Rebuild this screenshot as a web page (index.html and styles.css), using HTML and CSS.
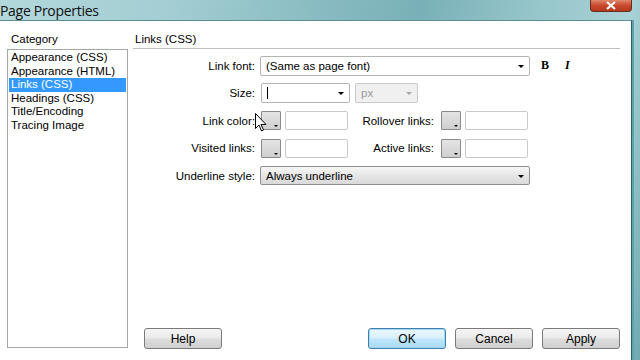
FILE: index.html
```html
<!DOCTYPE html>
<html>
<head>
<meta charset="utf-8">
<link rel="stylesheet" href="styles.css">
</head>
<body>
<div class="window">
  <div class="titlebar">
    <span class="title">Page Properties</span>
    <span class="close"><svg width="12" height="9" viewBox="0 0 12 9"><path d="M2 1 L10 8 M10 1 L2 8" stroke="#fff" stroke-width="2.2"/></svg></span>
  </div>
  <div class="client">
    <div class="catcol">
      <div class="caption">Category</div>
      <ul class="list">
        <li>Appearance (CSS)</li>
        <li>Appearance (HTML)</li>
        <li class="sel">Links (CSS)</li>
        <li>Headings (CSS)</li>
        <li>Title/Encoding</li>
        <li>Tracing Image</li>
      </ul>
    </div>
    <div class="panel">
      <div class="heading">Links (CSS)</div>
      <div class="form">
        <div class="row r1">
          <label class="lbl">Link font:</label>
          <div class="select wide"><span>(Same as page font)</span><i class="arrow"></i></div>
          <span class="bi b">B</span>
          <span class="bi it">I</span>
        </div>
        <div class="row r2">
          <label class="lbl">Size:</label>
          <div class="select size"><span class="caret"></span><i class="arrow"></i></div>
          <div class="select px dis"><span>px</span><i class="arrow"></i></div>
        </div>
        <div class="row r3">
          <label class="lbl">Link color:</label>
          <span class="swatch"><i></i></span>
          <span class="field"></span>
          <label class="lbl2">Rollover links:</label>
          <span class="swatch"><i></i></span>
          <span class="field"></span>
        </div>
        <div class="row r4">
          <label class="lbl">Visited links:</label>
          <span class="swatch"><i></i></span>
          <span class="field"></span>
          <label class="lbl2">Active links:</label>
          <span class="swatch"><i></i></span>
          <span class="field"></span>
        </div>
        <div class="row r5">
          <label class="lbl">Underline style:</label>
          <div class="select wide btnlike"><span>Always underline</span><i class="arrow"></i></div>
        </div>
      </div>
      <div class="buttons">
        <button class="btn help">Help</button>
        <span class="spacer"></span>
        <button class="btn ok">OK</button>
        <button class="btn">Cancel</button>
        <button class="btn">Apply</button>
      </div>
    </div>
  </div>
  <svg class="cursor" width="13" height="20" viewBox="0 0 13 20"><path d="M0.5 0.5 L0.5 15.5 L4 12 L6.5 18 L8.5 17 L6 11.5 L11 11.5 Z" fill="#fff" stroke="#000" stroke-width="1"/></svg>
</div>
</body>
</html>
```
FILE: styles.css
```css
* { box-sizing: border-box; }
html, body { margin: 0; padding: 0; }
body { width: 640px; height: 360px; overflow: hidden; font-family: "Liberation Sans", Arial, sans-serif; font-size: 11.5px; color: #000; }
.window { position: relative; width: 640px; height: 360px; background: linear-gradient(100deg, #b3d8dc 0%, #a2cdd2 25%, #89bcc2 45%, #79b0b7 60%, #94c4c9 75%, #a9d2d6 90%, #6fa9b0 100%); display: flex; flex-direction: column; }
.titlebar { height: 20px; display: flex; align-items: flex-start; padding-right: 8px; }
.title { font-size: 14px; margin-left: 0; margin-top: 1px; color: #111; font-family: "Open Sans", "Liberation Sans", sans-serif; letter-spacing: -0.3px; }
.close { margin-left: auto; width: 42px; height: 12px; background: linear-gradient(#e0886c, #c8482a 50%, #b43a1e); border: 1px solid #6b2a1c; border-top: none; border-radius: 0 0 4px 4px; display: flex; justify-content: center; align-items: center; }
.client { flex: 1; margin-right: 8px; background: #fff; display: flex; border-top: 1px solid #5c8e94; border-right: 1px solid #2f5f66; box-shadow: 2px 0 0 #5fa3ab; }
.catcol { width: 133px; padding: 11px 0 12px 7px; display: flex; flex-direction: column; }
.caption { padding-left: 4px; height: 17px; line-height: 14px; }
.list { list-style: none; margin: 0; padding: 1px 1px; border: 1px solid #a6a6a6; width: 121px; flex: 1; }
.list li { height: 13.5px; line-height: 13px; padding-left: 2px; white-space: nowrap; }
.list li.sel { background: #3399ff; color: #fff; }
.panel { flex: 1; display: flex; flex-direction: column; padding: 11px 11px 11px 0; }
.heading { height: 17px; line-height: 14px; padding-left: 2px; border-bottom: 1px solid #bdbdbd; }
.form { display: flex; flex-direction: column; padding-top: 3px; }
.row { display: flex; align-items: center; height: 27.5px; }
.lbl { width: 122px; text-align: right; margin-right: 5px; white-space: nowrap; }
.lbl2 { width: 86px; text-align: right; margin-right: 6px; white-space: nowrap; }
.select { position: relative; height: 20px; border: 1px solid #b4b4b4; border-radius: 2px; background: #fff; display: flex; align-items: center; padding-left: 5px; }
.select .arrow { position: absolute; right: 5px; top: 8px; width: 0; height: 0; border-left: 3px solid transparent; border-right: 3px solid transparent; border-top: 3px solid #000; }
.wide { width: 270px; }
.btnlike { background: linear-gradient(#f7f7f7, #e6e6e6 50%, #d9d9d9); border-color: #8e8e8e; height: 19px; }
.size { width: 89px; margin-left: 1px; }
.caret { width: 1px; height: 12px; background: #000; }
.px { width: 63px; margin-left: 5px; background: #f0f0f0; color: #9a9a9a; border-color: #c8c8c8; }
.px .arrow { border-top-color: #a8a8a8; }
.bi { font-family: "Liberation Serif", serif; font-weight: bold; font-size: 12px; }
.b { margin-left: 11px; }
.it { margin-left: 16px; font-style: italic; }
.swatch { position: relative; width: 20px; height: 19px; margin-left: 1px; border: 1px solid #8a8a8a; background: linear-gradient(#e4e4e4, #cfcfcf); border-radius: 1px; }
.swatch i { position: absolute; right: 2px; bottom: 2px; border-left: 2px solid transparent; border-right: 2px solid transparent; border-top: 2px solid #000; }
.field { width: 63px; height: 19px; margin-left: 4px; border: 1px solid #c9c9c9; border-radius: 2px; background: #fff; }
.buttons { margin-top: auto; display: flex; align-items: center; padding-left: 11px; }
.spacer { flex: 1; }
.btn { width: 78px; height: 21px; margin-left: 9px; font-family: inherit; font-size: 12px; color: #000; border: 1px solid #7a7a7a; border-radius: 3px; background: linear-gradient(#f4f4f4, #ebebeb 45%, #dcdcdc 55%, #cfcfcf); padding: 0; }
.btn.help { margin-left: 0; }
.btn.ok { border-color: #3c7fb1; box-shadow: inset 0 0 0 1px #a8d8f0; background: linear-gradient(#eaf6fd, #d9f0fc 45%, #bee6fd 55%, #a7d9f5); }
.cursor { position: absolute; left: 255px; top: 113px; }
```
